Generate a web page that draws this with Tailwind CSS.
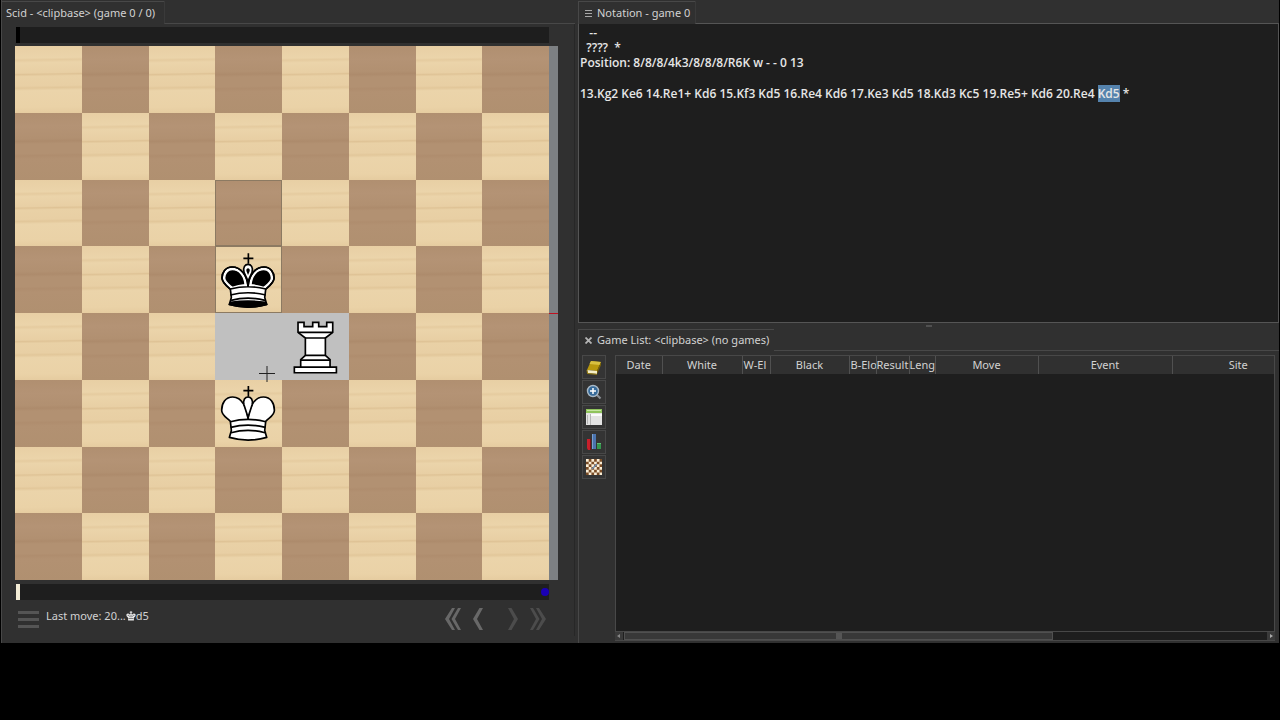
<!DOCTYPE html>
<html lang="en">
<head>
  <meta charset="UTF-8">
  <meta name="viewport" content="width=device-width, initial-scale=1.0">
  <title>Scid - &lt;clipbase&gt; (game 0 / 0)</title>
  <script src="https://cdn.jsdelivr.net/npm/@tailwindcss/browser@4"></script>
</head>
<body class="min-h-screen bg-black font-['Noto_Sans','Open_Sans',sans-serif] text-[11px] text-[#d2d2d2]">
  <main class="grid grid-cols-[574fr_704fr] bg-[#303030] border-x border-black">

    <!-- Board window -->
    <section class="flex flex-col border-l border-[#484848] pb-[7px]">
      <div class="flex items-end h-6">
        <h1 class="h-[23px] pl-1 pr-[9px] leading-[22px] border-t border-[#484848] whitespace-nowrap">Scid - &lt;clipbase&gt; (game 0 / 0)</h1>
        <div class="flex-1 border-b border-l border-[#484848] h-[23px] border-l-[#3a3a3a]"></div>
      </div>

      <div class="pl-[13px] pr-4 pt-[3px] flex-1 border-r border-[#272727]">
        <div class="mr-[9px] h-4 ml-px bg-[#1e1e1e] mb-[3px] flex items-center"><div class="w-1 h-4 bg-black"></div></div>
        <div class="flex">
          <div class="relative flex-1 aspect-square">
            <div id="board" class="grid grid-cols-8 grid-rows-8 size-full"></div>
            <svg class="absolute left-[244px] top-[320px] size-4" viewBox="0 0 16 16" stroke="#222" stroke-width="1" aria-hidden="true"><path d="M8 0V16M0 7.500H16"/></svg>
          </div>
          <div class="w-[9px] bg-[#7d8083] flex flex-col">
            <div class="flex-1"></div>
            <div class="flex-1 border-t border-[#c01020]"></div>
          </div>
        </div>
        <div class="mr-[9px] h-4 ml-px bg-[#1e1e1e] mt-1 flex items-center justify-between">
          <div class="w-1 h-4 bg-[#f2ebd5]"></div>
          <div class="size-2 rounded-full bg-[#1a00b4]"></div>
        </div>
        <div class="flex h-9 mr-3 items-start">
          <button aria-label="Menu" class="flex flex-col gap-1 w-[21px] ml-[3px] mt-[11px]">
            <span class="h-[3px] w-full bg-[#555]"></span>
            <span class="h-[3px] w-full bg-[#555]"></span>
            <span class="h-[3px] w-full bg-[#555]"></span>
          </button>
          <p class="ml-[7px] mt-[7px] leading-[18px] flex whitespace-nowrap">Last move: 20...<svg class="size-[10px] mt-1 shrink-0" viewBox="0 0 12 12" fill="#e8e8e8" role="img" aria-label="king"><path d="M5.500 0h1v1h1v1h-1v1l1 1.200C9 2.200 12 3 11.500 5.500 11.200 7 10 7.500 9.500 8.200V11.500h-7V8.200C2 7.500.8 7 .5 5.500 0 3 3 2.200 4.500 4.200l1-1.200V2h-1V1h1z"/><path d="M3 9h6M2 5.500Q3 4 4.800 7M10 5.500Q9 4 7.200 7M6 4.500v3" stroke="#303030" stroke-width=".7" fill="none"/></svg>d5</p>
          <div class="ml-auto flex mt-2 text-[#686868]">
            <button aria-label="Go to start"><svg class="w-4 h-[22px]" viewBox="0 0 16 22" fill="currentColor"><path d="M7 0h3L4 11l6 11H7L0 11zM13 0h3l-6 11 6 11h-3L6.500 11z"/></svg></button>
            <button aria-label="Back" class="ml-3"><svg class="w-[10px] h-[22px]" viewBox="0 0 10 22" fill="currentColor"><path d="M6.500 0H10L4 11l6 11H6.500L0 11z"/></svg></button>
            <button aria-label="Forward" class="ml-[25px] text-[#4c4c4c]" disabled><svg class="w-[10px] h-[22px]" viewBox="0 0 10 22" fill="currentColor"><path d="M3.500 0H0l6 11L0 22h3.500L10 11z"/></svg></button>
            <button aria-label="Go to end" class="ml-3 text-[#4c4c4c]" disabled><svg class="w-4 h-[22px]" viewBox="0 0 16 22" fill="currentColor"><path d="M9 0H6l6 11L6 22h3l7-11zM3 0H0l6 11L0 22h3l6.500-11z"/></svg></button>
          </div>
        </div>
      </div>
    </section>

    <div class="flex flex-col pl-[3px] min-w-0">
      <!-- Notation window -->
      <section class="flex flex-col h-[323px]">
        <div class="flex items-end h-6 shrink-0">
          <div class="flex items-center h-[23px] pl-[6px] pr-[5px] border-t border-l border-[#484848]">
            <button aria-label="Notation menu" class="flex flex-col gap-[2px] w-[7px] mr-[5px]">
              <span class="h-px w-full bg-[#a8a8a8]"></span>
              <span class="h-px w-full bg-[#a8a8a8]"></span>
              <span class="h-px w-full bg-[#a8a8a8]"></span>
            </button>
            <h2 class="whitespace-nowrap">Notation - game 0</h2>
          </div>
          <div class="flex-1 h-[23px] border-b border-l border-[#555] border-l-[#3a3a3a]"></div>
        </div>
        <div class="flex-1 bg-[#1e1e1e] border border-t-0 border-[#555] pl-px pt-px font-['Open_Sans','Noto_Sans',sans-serif] font-semibold text-xs leading-[15px] text-[#e6e6e6]">
          <p class="whitespace-pre">   --</p>
          <p class="whitespace-pre">  ????  *</p>
          <p>Position: 8/8/8/4k3/8/8/8/R6K w - - 0 13</p>
          <p class="mt-4">13.Kg2 Ke6 14.Re1+ Kd6 15.Kf3 Kd5 16.Re4 Kd6 17.Ke3 Kd5 18.Kd3 Kc5 19.Re5+ Kd6 20.Re4 <span class="bg-[#5583ad]">Kd5</span> *</p>
        </div>
      </section>

      <div class="h-[6px] flex justify-center pt-[2px]"><div class="w-[6px] h-[2px] bg-[#505050]"></div></div>

      <!-- Game list window -->
      <section class="flex flex-col flex-1 border-l border-[#484848]">
        <div class="flex items-end h-[22px]">
          <div class="flex items-center h-[22px] pl-[6px] pr-[5px] border-t border-[#484848]">
            <button aria-label="Close game list" class="mr-[5px]"><svg class="size-[7px]" viewBox="0 0 7 7" stroke="#b4b4b4" stroke-width="1.800"><path d="M.5.5l6 6M6.500.5l-6 6"/></svg></button>
            <h2 class="whitespace-nowrap">Game List: &lt;clipbase&gt; (no games)</h2>
          </div>
          <div class="flex-1 h-[21px] border-b border-[#484848]"></div>
        </div>

        <div class="flex flex-1 pt-1 pl-[3px] pr-1 min-w-0">
          <div class="flex flex-col gap-px w-6 mr-[9px] shrink-0">
            <button aria-label="Open database" class="grid place-items-center size-6 border border-[#484848] bg-[#343434]">
              <svg class="size-4" viewBox="0 0 16 16"><path d="M5 2l10 1-4 9-10-1z" fill="#b8980e"/><path d="M5 2l10 1-1.500 3-10-1z" fill="#d8c040"/><path d="M1 11l10 1v3L2 14z" fill="#f5efc8"/><path d="M11 12l4-9v3l-4 9z" fill="#7c6405"/><path d="M1 11l.5 3.500L11 15.300" fill="none" stroke="#a08410"/></svg>
            </button>
            <button aria-label="Search" class="grid place-items-center size-6 border border-[#484848] bg-[#343434]">
              <svg class="size-4" viewBox="0 0 16 16"><path d="M10.500 10.500l4 4" stroke="#8b9096" stroke-width="2.200"/><circle cx="7" cy="7" r="5.500" fill="#376b9a" stroke="#a9b9c6" stroke-width="1.400"/><path d="M7 4v6M4 7h6" stroke="#fff" stroke-width="1.500"/></svg>
            </button>
            <button aria-label="Layout" class="grid place-items-center size-6 border border-[#484848] bg-[#343434]">
              <svg class="size-4" viewBox="0 0 16 16"><path fill="#e3e3e3" d="M0 0h16v16H0z"/><path fill="#8fc35c" d="M0 0h16v4H0z"/><path fill="#c6e6a2" d="M1 1h14v1H1z"/><path fill="#fafafa" d="M5 5h11v2H5z"/><path fill="#b5b5b5" d="M4 5h1v11H4zM1 6h1v9H1z"/></svg>
            </button>
            <button aria-label="Statistics" class="grid place-items-center size-6 border border-[#484848] bg-[#343434]">
              <svg class="size-4" viewBox="0 0 16 16"><path fill="#c81f2b" d="M1 5h4v11H2L1 14z"/><path fill="#7d1018" d="M4 5h1v11H4z"/><path fill="#4b74ae" d="M6 0h4v15H6z"/><path fill="#7ba0d0" d="M6 0h1v15H6z"/><path fill="#35974d" d="M11 9h4v6h-4z"/><path fill="#62bd75" d="M11 9h4v1h-4z"/></svg>
            </button>
            <button aria-label="Board filter" class="grid place-items-center size-6 border border-[#484848] bg-[#343434]">
              <svg class="size-4" viewBox="0 0 16 16"><path fill="#fbeed6" d="M0 0h16v16H0z"/><path stroke="#7a4c26" stroke-width="2.700" stroke-dasharray="2.700 2.700" d="M2.700 1.300H16M0 4H16M2.700 6.700H16M0 9.400H16M2.700 12.100H16M0 14.800H16"/><path d="M6 10l5-5" stroke="#6f8db0" stroke-width="1.500"/></svg>
            </button>
          </div>

          <div class="flex-1 min-w-0 flex flex-col">
            <div class="flex-1 overflow-hidden bg-[#1e1e1e] border border-[#484848]">
              <table class="table-fixed w-[688px]">
                <thead>
                  <tr class="h-[18px] bg-[#303030] leading-[18px]">
                    <th class="w-[46px] font-normal border-r border-[#505050]">Date</th>
                    <th class="w-[80px] font-normal border-r border-[#505050]">White</th>
                    <th class="w-[28px] font-normal border-r border-[#505050] text-left pl-px overflow-hidden whitespace-nowrap">W-El</th>
                    <th class="w-[79px] font-normal border-r border-[#505050]">Black</th>
                    <th class="w-[27px] font-normal border-r border-[#505050] text-left pl-px overflow-hidden whitespace-nowrap">B-Elo</th>
                    <th class="w-[33px] font-normal border-r border-[#505050] text-left overflow-hidden whitespace-nowrap">Result</th>
                    <th class="w-[26px] font-normal border-r border-[#505050] text-left overflow-hidden whitespace-nowrap">Leng</th>
                    <th class="w-[103px] font-normal border-r border-[#505050]">Move</th>
                    <th class="w-[134px] font-normal border-r border-[#505050]">Event</th>
                    <th class="w-[132px] font-normal">Site</th>
                  </tr>
                </thead>
                <tbody></tbody>
              </table>
            </div>
            <!-- Horizontal scrollbar -->
            <div class="flex h-[9px] mb-[2px] bg-[#1e1e1e] border-b border-[#484848]">
              <button aria-label="Scroll left" class="grid place-items-center w-2 bg-[#3a3a3a]"><svg class="size-1" viewBox="0 0 4 4" fill="#888"><path d="M3 0v4L0 2z"/></svg></button>
              <div class="w-[65%] ml-px bg-[#383838] border border-[#505050] flex justify-center"><div class="w-[6px] bg-[#555]"></div></div>
              <button aria-label="Scroll right" class="ml-auto grid place-items-center w-2 bg-[#3a3a3a]"><svg class="size-1" viewBox="0 0 4 4" fill="#aaa"><path d="M1 0v4l3-2z"/></svg></button>
            </div>
          </div>
        </div>
      </section>
    </div>
  </main>

  <!-- Piece drawings -->
  <template id="piece-k">
    <svg class="size-full" viewBox="0 0 200 200" stroke="#000" stroke-width="5" stroke-linejoin="round">
      <path d="M100 22V53M85 37H115" fill="none"/>
      <path d="M99 120C96 88 78 63 51 63C31 63 21 80 21 96C21 110 35 120 46 129L49 154L43 175Q99 191 155 175L149 154L152 129C163 120 177 110 177 96C177 80 167 63 147 63C120 63 102 88 99 120Z" fill="#fff"/>
      <path d="M90 116C88 91 74 71 52 71C37 71 29 83 29 96C29 108 41 115 52 124Q70 118 90 116ZM108 116C110 91 124 71 146 71C161 71 169 83 169 96C169 108 157 115 146 124Q128 118 108 116Z" fill="#000" stroke="#fff" stroke-width="4"/>
      <path d="M51 63C31 63 21 80 21 96C21 110 35 120 46 129Q99 115 152 129C163 120 177 110 177 96C177 80 167 63 147 63C120 63 102 88 99 120C96 88 78 63 51 63Z" fill="none"/>
      <path d="M99 105L87 79C78 47 120 47 111 79Z" fill="#fff"/>
      <path d="M99 87L94 75C92 64 106 64 104 75Z" fill="#000" stroke="none"/>
      <path d="M46 147Q99 133 152 147M48 163Q99 149 150 163" fill="none"/>
      <path d="M47 169Q99 161 151 169L155 175Q99 191 43 175Z" fill="#000"/>
    </svg>
  </template>
  <template id="piece-K">
    <svg class="size-full" viewBox="0 0 200 200" stroke="#000" stroke-width="5" stroke-linejoin="round">
      <path d="M100 18V50M85 32H115" fill="none"/>
      <path d="M99 117C96 85 82 51 53 51C31 51 20 70 20 91C20 107 35 112 46 124L49 151L43 172Q99 188 155 172L149 151L152 124C163 112 178 107 178 91C178 70 167 51 145 51C116 51 102 85 99 117Z" fill="#fff"/>
      <path d="M99 112L87 75C78 43 120 43 111 75Z" fill="#fff"/>
      <path d="M46 125Q99 111 152 125M47 142Q99 128 151 142M48 158Q99 144 150 158" fill="none"/>
    </svg>
  </template>
  <template id="piece-R">
    <svg class="size-full" viewBox="0 0 200 200" fill="#fff" stroke="#000" stroke-width="5">
      <path d="M48 28H66V41H92V28H110V41H134V28H152V58L130 75V127L144 140V162H163V179H37V162H56V140L70 127V75L48 58Z"/>
      <path d="M48 58H152M70 75H130M70 127H130M56 141H144M56 162H144" fill="none"/>
    </svg>
  </template>

  <script>
    const position = '8/8/8/3k4/4R3/3K4/8/8';
    const lastMoveSquares = [35, 36];
    const outlinedSquares = [19, 27];

    /**
     * Draw the position on the board, one div per square.
     */
    function renderBoard(fen) {
      const board = document.getElementById('board');
      const cells = fen.replaceAll('/', '').replace(/\d/g, n => '.'.repeat(n));

      [...cells].forEach((piece, i) => {
        const square = document.createElement('div');
        const isLight = (Math.floor(i / 8) + i) % 2 === 0;

        if (lastMoveSquares.includes(i)) {
          square.className = 'min-w-0 min-h-0 bg-[#c0c0c0]';
        } else if (isLight) {
          square.className = 'min-w-0 min-h-0 bg-[#e8cfa4] bg-[linear-gradient(179deg,#e8cfa4_0%,#ebd4aa_18%,#e5cb9f_21%,#ebd4aa_25%,#e8cfa4_40%,#dfc396_42%,#e9d1a6_45%,#e8cfa4_59%,#e2c79a_62%,#ebd4aa_66%,#ead2a7_90%,#e5cb9f_100%)]';
        } else {
          square.className = 'min-w-0 min-h-0 bg-[#b29172] bg-[linear-gradient(179deg,#b08f70_0%,#b49375_20%,#b19071_38%,#ad8b6c_42%,#b29172_46%,#b29172_60%,#af8d6e_63%,#b29172_68%,#b09070_100%)]';
        }
        if (outlinedSquares.includes(i)) {
          square.classList.add('outline', 'outline-[#8c7a62]', '-outline-offset-1');
        }
        if (piece !== '.') {
          square.appendChild(document.getElementById('piece-' + piece).content.cloneNode(true));
        }
        board.appendChild(square);
      });
    }

    renderBoard(position);
  </script>
</body>
</html>
